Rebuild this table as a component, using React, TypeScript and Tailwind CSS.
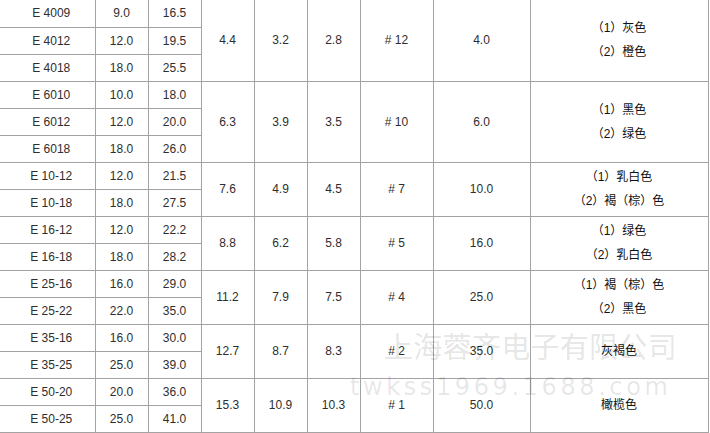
import React from "react";

type Group = {
  rows: [string, string, string][];
  d: string;
  l: string;
  w: string;
  size: string;
  amp: string;
  colors: string[];
};

const groups: Group[] = [
  {
    rows: [
      ["E 4009", "9.0", "16.5"],
      ["E 4012", "12.0", "19.5"],
      ["E 4018", "18.0", "25.5"],
    ],
    d: "4.4",
    l: "3.2",
    w: "2.8",
    size: "# 12",
    amp: "4.0",
    colors: ["（1）灰色", "（2）橙色"],
  },
  {
    rows: [
      ["E 6010", "10.0", "18.0"],
      ["E 6012", "12.0", "20.0"],
      ["E 6018", "18.0", "26.0"],
    ],
    d: "6.3",
    l: "3.9",
    w: "3.5",
    size: "# 10",
    amp: "6.0",
    colors: ["（1）黑色", "（2）绿色"],
  },
  {
    rows: [
      ["E 10-12", "12.0", "21.5"],
      ["E 10-18", "18.0", "27.5"],
    ],
    d: "7.6",
    l: "4.9",
    w: "4.5",
    size: "# 7",
    amp: "10.0",
    colors: ["（1）乳白色", "（2）褐（棕）色"],
  },
  {
    rows: [
      ["E 16-12", "12.0", "22.2"],
      ["E 16-18", "18.0", "28.2"],
    ],
    d: "8.8",
    l: "6.2",
    w: "5.8",
    size: "# 5",
    amp: "16.0",
    colors: ["（1）绿色", "（2）乳白色"],
  },
  {
    rows: [
      ["E 25-16", "16.0", "29.0"],
      ["E 25-22", "22.0", "35.0"],
    ],
    d: "11.2",
    l: "7.9",
    w: "7.5",
    size: "# 4",
    amp: "25.0",
    colors: ["（1）褐（棕）色", "（2）黑色"],
  },
  {
    rows: [
      ["E 35-16", "16.0", "30.0"],
      ["E 35-25", "25.0", "39.0"],
    ],
    d: "12.7",
    l: "8.7",
    w: "8.3",
    size: "# 2",
    amp: "35.0",
    colors: ["灰褐色"],
  },
  {
    rows: [
      ["E 50-20", "20.0", "36.0"],
      ["E 50-25", "25.0", "41.0"],
    ],
    d: "15.3",
    l: "10.9",
    w: "10.3",
    size: "# 1",
    amp: "50.0",
    colors: ["橄榄色"],
  },
];

const cell = "border border-[#a3a3a3] text-center align-middle p-0";

export default function App() {
  return (
    <div className="relative w-[710px] h-[433px] overflow-hidden bg-white font-['Liberation_Sans','Noto_Sans_CJK_SC',sans-serif] text-[12px] text-[#2e2e2e]">
      <table className="table-fixed border-collapse w-[708px]">
        <colgroup>
          <col className="w-[95px]" />
          <col className="w-[53px]" />
          <col className="w-[53px]" />
          <col className="w-[53px]" />
          <col className="w-[53px]" />
          <col className="w-[53px]" />
          <col className="w-[73px]" />
          <col className="w-[97px]" />
          <col className="w-[178px]" />
        </colgroup>
        <tbody>
          {groups.map((g, gi) =>
            g.rows.map((r, ri) => (
              <tr
                key={`${gi}-${ri}`}
                className={`h-[27px] ${gi === 0 && ri === 0 ? "[&>td]:border-t-0" : ""}`}
              >
                <td className={`${cell} border-l-0 pl-2`}>{r[0]}</td>
                <td className={cell}>{r[1]}</td>
                <td className={cell}>{r[2]}</td>
                {ri === 0 && (
                  <>
                    <td className={cell} rowSpan={g.rows.length}>
                      {g.d}
                    </td>
                    <td className={cell} rowSpan={g.rows.length}>
                      {g.l}
                    </td>
                    <td className={cell} rowSpan={g.rows.length}>
                      {g.w}
                    </td>
                    <td className={cell} rowSpan={g.rows.length}>
                      {g.size}
                    </td>
                    <td className={cell} rowSpan={g.rows.length}>
                      {g.amp}
                    </td>
                    <td
                      className={`${cell} text-[#111] leading-[24px]`}
                      rowSpan={g.rows.length}
                    >
                      {g.colors.map((c) => (
                        <div key={c}>{c}</div>
                      ))}
                    </td>
                  </>
                )}
              </tr>
            ))
          )}
        </tbody>
      </table>

      {/* watermark */}
      <div className="pointer-events-none absolute left-[350px] top-[326px] flex flex-col items-start">
        <span className="ml-[34px] text-[29px] leading-[38px] tracking-[0.3px] text-black/[0.11] font-['Noto_Sans_CJK_SC',sans-serif] [-webkit-text-stroke:0.6px_rgba(0,0,0,0.05)]">
          上海蓉齐电子有限公司
        </span>
        <span className="mt-[8px] text-[24px] leading-[30px] tracking-[3.6px] text-black/[0.1] font-['DejaVu_Sans',sans-serif] [-webkit-text-stroke:0.5px_rgba(0,0,0,0.05)]">
          twkss1969.1688.com
        </span>
      </div>
    </div>
  );
}
